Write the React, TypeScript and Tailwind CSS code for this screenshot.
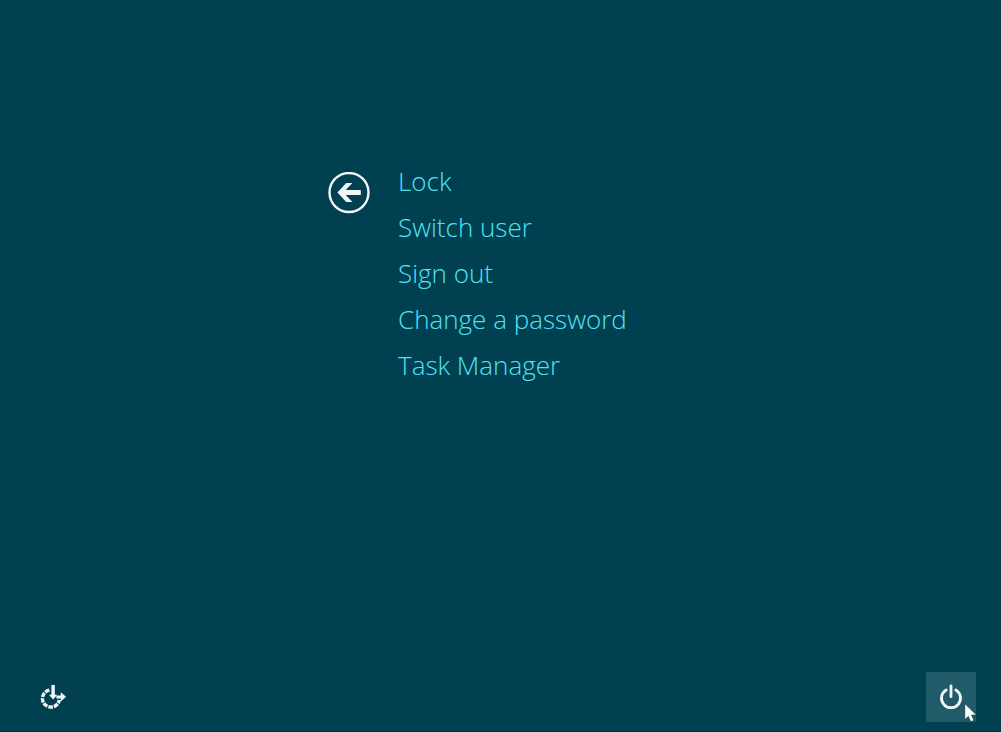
import type { ReactNode } from "react";

const menuItems = [
  "Lock",
  "Switch user",
  "Sign out",
  "Change a password",
  "Task Manager",
];

interface IconButtonProps {
  label: string;
  className?: string;
  children: ReactNode;
}

function IconButton({ label, className = "", children }: IconButtonProps) {
  return (
    <button
      type="button"
      aria-label={label}
      className={`relative flex items-center justify-center ${className}`}
    >
      {children}
    </button>
  );
}

function BackIcon() {
  return (
    <svg className="w-[42px] h-[42px]" viewBox="0 0 42 42" fill="none">
      <circle cx="21" cy="20.5" r="19.5" stroke="#f2f6f7" strokeWidth={2.4} />
      <path
        d="M9.4 20.5 18.2 11h6.2l-6.6 7h15v5h-15l6.6 7h-6.2L9.4 20.5Z"
        fill="#f2f6f7"
      />
    </svg>
  );
}

function EaseOfAccessIcon() {
  return (
    <svg className="w-[26px] h-[26px]" viewBox="0 0 26 26" fill="none">
      <path
        d="M9.4 6.2A8.5 8.5 0 1 0 19.3 16"
        stroke="#f2f6f7"
        strokeWidth={3.4}
        strokeDasharray="4.6 1"
      />
      <path
        d="M11.4 1h3.4v9.8h2.4L13.1 15.4 9 10.8h2.4V1Z"
        fill="#f2f6f7"
      />
      <path
        d="M16.4 11.4h4.4V8.2l5.2 4.6-5.2 4.7v-3.1h-4.4v-3Z"
        fill="#f2f6f7"
      />
    </svg>
  );
}

function PowerIcon() {
  return (
    <svg
      className="w-[26px] h-[26px]"
      viewBox="0 0 26 26"
      fill="none"
      stroke="#f2f6f7"
      strokeWidth={2.8}
      strokeLinecap="round"
    >
      <path d="M13 1.9v10.8" />
      <path d="M8.2 6a9.5 9.5 0 1 0 9.6 0" />
    </svg>
  );
}

function Cursor() {
  return (
    <svg
      className="absolute left-[38px] top-[31px] w-[13px] h-[20px]"
      viewBox="0 0 13 20"
      aria-hidden="true"
    >
      <path
        d="M.8.6v16l3.6-3.2 2.3 5.3 3.2-1.3-2.3-5.3h4.9L.8.6Z"
        fill="#fff"
        stroke="#0a2a33"
        strokeWidth={0.6}
      />
    </svg>
  );
}

export default function App() {
  return (
    <div className="min-h-screen flex flex-col bg-[#004050] border-b border-[#00303f] font-['Open_Sans',sans-serif]">
      <main className="flex-1 pt-[158px]">
        <div className="w-[345px] mx-auto flex items-start gap-7">
          <IconButton label="Back" className="mt-[14px]">
            <BackIcon />
          </IconButton>
          <nav aria-label="Security options">
            <ul>
              {menuItems.map((item) => (
                <li key={item}>
                  <button
                    type="button"
                    className="text-[26px] leading-[46px] font-light text-[#4fe4f5] whitespace-nowrap"
                  >
                    {item}
                  </button>
                </li>
              ))}
            </ul>
          </nav>
        </div>
      </main>

      <footer className="flex items-center justify-between pl-7 pr-[25px] pb-[9px]">
        <IconButton label="Ease of access" className="w-[50px] h-[50px]">
          <EaseOfAccessIcon />
        </IconButton>
        <IconButton label="Power" className="w-[50px] h-[50px] bg-[#205b69]">
          <PowerIcon />
          <Cursor />
        </IconButton>
      </footer>
    </div>
  );
}
